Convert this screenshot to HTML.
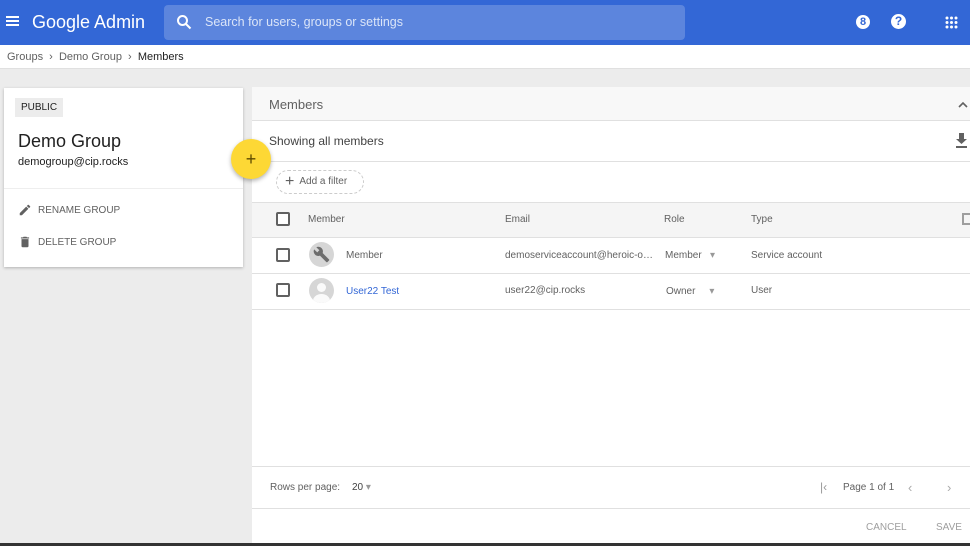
<!DOCTYPE html><html><head><style>
*{box-sizing:border-box;margin:0;padding:0}
body{width:970px;height:546px;overflow:hidden;background:#ececec;font-family:"Liberation Sans",sans-serif;position:relative;color:#212121}
.a{position:absolute}
.t{font-size:10px;color:#616161}
.cb{position:absolute;width:14px;height:14px;border:2px solid #616161;border-radius:2px;background:#fff}
.line{position:absolute;left:252px;right:0;height:1px;background:#e0e0e0}
</style></head><body>
<div class="a" style="left:0;top:0;width:970px;height:45px;background:#3367d6"></div>
<div class="a" style="left:6px;top:16px;width:13px;height:2px;background:#fff;box-shadow:0 4px #fff,0 8px #fff"></div>
<div class="a" style="left:32px;top:12px;font-size:18px;color:#fff">Google Admin</div>
<div class="a" style="left:164px;top:5px;width:521px;height:35px;background:#5c85dd;border-radius:4px"></div>
<svg class="a" style="left:176px;top:14px" width="16" height="16" viewBox="0 0 16 16"><circle cx="6.5" cy="6.5" r="4.5" fill="none" stroke="#fff" stroke-width="2"/><path d="M10 10l4.5 4.5" stroke="#fff" stroke-width="2"/></svg>
<div class="a" style="left:205px;top:15px;font-size:12.5px;color:#dbe5f8">Search for users, groups or settings</div>
<div class="a" style="left:856px;top:15px;width:14px;height:14px;border-radius:50%;background:#fff;color:#3367d6;font-size:11px;text-align:center;line-height:14px;font-weight:bold">8</div>
<div class="a" style="left:891px;top:14px;width:15px;height:15px;border-radius:50%;background:#fff;color:#3367d6;font-size:12px;text-align:center;line-height:15px;font-weight:bold">?</div>
<svg class="a" style="left:945px;top:16px" width="13" height="13"><g fill="#fff"><circle cx="2" cy="2" r="1.5"/><circle cx="6.5" cy="2" r="1.5"/><circle cx="11" cy="2" r="1.5"/><circle cx="2" cy="6.5" r="1.5"/><circle cx="6.5" cy="6.5" r="1.5"/><circle cx="11" cy="6.5" r="1.5"/><circle cx="2" cy="11" r="1.5"/><circle cx="6.5" cy="11" r="1.5"/><circle cx="11" cy="11" r="1.5"/></g></svg>
<div class="a" style="left:0;top:45px;width:970px;height:24px;background:#fff;border-bottom:1px solid #e0e0e0"></div>
<div class="a" style="left:7px;top:51px;font-size:11px;color:#616161">Groups &nbsp;›&nbsp; Demo Group &nbsp;›&nbsp; <span style="color:#212121">Members</span></div>
<div class="a" style="left:4px;top:88px;width:239px;height:179px;background:#fff;box-shadow:0 1px 3px rgba(0,0,0,.25)"></div>
<div class="a" style="left:15px;top:98px;width:48px;height:19px;background:#ececec;font-size:10px;line-height:19px;text-align:center">PUBLIC</div>
<div class="a" style="left:18px;top:131px;font-size:18px">Demo Group</div>
<div class="a" style="left:18px;top:156px;font-size:11px">demogroup@cip.rocks</div>
<div class="a" style="left:4px;top:188px;width:239px;height:1px;background:#eee"></div>
<svg class="a" style="left:18px;top:203px" width="14" height="14" viewBox="0 0 24 24"><path fill="#616161" d="M3 17.25V21h3.75L17.8 9.94l-3.75-3.75zM20.7 7.04a1 1 0 000-1.41l-2.34-2.34a1 1 0 00-1.41 0l-1.83 1.83 3.75 3.75z"/></svg>
<div class="a" style="left:38px;top:205px;font-size:10px;color:#616161">RENAME GROUP</div>
<svg class="a" style="left:18px;top:235px" width="14" height="14" viewBox="0 0 24 24"><path fill="#616161" d="M6 19a2 2 0 002 2h8a2 2 0 002-2V7H6zM19 4h-3.5l-1-1h-5l-1 1H5v2h14z"/></svg>
<div class="a" style="left:38px;top:237px;font-size:10px;color:#616161">DELETE GROUP</div>
<div class="a" style="left:252px;top:87px;width:718px;height:459px;background:#fff"></div>
<div class="a" style="left:252px;top:87px;width:718px;height:34px;background:#f8f8f8;border-bottom:1px solid #e0e0e0"></div>
<div class="a" style="left:269px;top:97px;font-size:13px;color:#616161">Members</div>
<svg class="a" style="left:958px;top:101px" width="10" height="7"><path d="M1 6l4-4 4 4" fill="none" stroke="#616161" stroke-width="1.6"/></svg>
<div class="a" style="left:269px;top:134px;font-size:12px;color:#424242">Showing all members</div>
<svg class="a" style="left:955px;top:133px" width="13" height="15"><path d="M4 0h5v6h3l-5.5 5L1 6h3z M1 13h11v2H1z" fill="#616161"/></svg>
<div class="line" style="top:161px"></div>
<div class="a" style="left:231px;top:139px;width:40px;height:40px;border-radius:50%;background:#fdd835;box-shadow:0 2px 4px rgba(0,0,0,.3);text-align:center;line-height:40px;font-size:18px;color:#5d4a00">+</div>
<div class="a" style="left:276px;top:170px;width:88px;height:24px;border:1px dashed #ccc;border-radius:12px;font-size:10px;color:#616161;line-height:22px;padding-left:8px"><span style="font-size:16px;vertical-align:-2px">+</span>&nbsp; Add a filter</div>
<div class="a" style="left:252px;top:202px;width:718px;height:36px;background:#f5f5f5;border-top:1px solid #e0e0e0;border-bottom:1px solid #e0e0e0"></div>
<div class="cb" style="left:276px;top:212px"></div>
<div class="a t" style="left:308px;top:214px">Member</div><div class="a t" style="left:505px;top:214px">Email</div><div class="a t" style="left:664px;top:214px">Role</div><div class="a t" style="left:751px;top:214px">Type</div>
<div class="a" style="left:962px;top:213px;width:10px;height:12px;border:2px solid #9e9e9e"></div>
<div class="cb" style="left:276px;top:248px"></div>
<div class="a" style="left:309px;top:242px;width:25px;height:25px;border-radius:50%;background:#d6d6d6"></div>
<svg class="a" style="left:313px;top:246px" width="17" height="17" viewBox="0 0 24 24"><path fill="#6d6d6d" d="M22.7 19l-9.1-9.1c.9-2.3.4-5-1.5-6.9-2-2-5-2.4-7.4-1.3L9 6 6 9 1.6 4.7C.4 7.1.9 10.1 2.9 12.1c1.9 1.9 4.6 2.4 6.9 1.5l9.1 9.1c.4.4 1 .4 1.4 0l2.3-2.3c.5-.4.5-1.1.1-1.4z"/></svg>
<div class="a t" style="left:346px;top:250px;font-size:10px">Member</div>
<div class="a t" style="left:505px;top:250px;width:148px;white-space:nowrap;overflow:hidden;text-overflow:ellipsis">demoserviceaccount@heroic-oar...</div>
<div class="a t" style="left:665px;top:250px">Member &nbsp;&nbsp;<span style="color:#999">▾</span></div>
<div class="a t" style="left:751px;top:250px">Service account</div>
<div class="line" style="top:273px"></div>
<div class="cb" style="left:276px;top:283px"></div>
<div class="a" style="left:309px;top:278px;width:25px;height:25px;border-radius:50%;background:#d6d6d6;overflow:hidden"><div class="a" style="left:8px;top:5px;width:9px;height:9px;border-radius:50%;background:#fafafa"></div><div class="a" style="left:4px;top:16px;width:17px;height:14px;border-radius:50%;background:#fafafa"></div></div>
<div class="a" style="left:346px;top:286px;font-size:10px;color:#3367d6">User22 Test</div>
<div class="a t" style="left:505px;top:285px">user22@cip.rocks</div>
<div class="a t" style="left:666px;top:286px">Owner &nbsp;&nbsp;&nbsp;&nbsp;<span style="color:#999">▾</span></div>
<div class="a t" style="left:751px;top:285px">User</div>
<div class="line" style="top:309px"></div>
<div class="line" style="top:466px"></div>
<div class="a t" style="left:270px;top:482px">Rows per page:</div>
<div class="a" style="left:352px;top:482px;font-size:10px;color:#424242">20 <span style="color:#999">▾</span></div>
<div class="a t" style="left:820px;top:480px;font-size:12px;color:#999">|‹</div>
<div class="a t" style="left:843px;top:482px">Page 1 of 1</div>
<div class="a t" style="left:908px;top:480px;font-size:13px;color:#aaa">‹</div>
<div class="a t" style="left:947px;top:480px;font-size:13px;color:#aaa">›</div>
<div class="line" style="top:508px"></div>
<div class="a" style="left:866px;top:522px;font-size:10px;color:#9e9e9e">CANCEL</div>
<div class="a" style="left:936px;top:522px;font-size:10px;color:#9e9e9e">SAVE</div>
<div class="a" style="left:0;top:543px;width:970px;height:3px;background:#333"></div>
</body></html>
